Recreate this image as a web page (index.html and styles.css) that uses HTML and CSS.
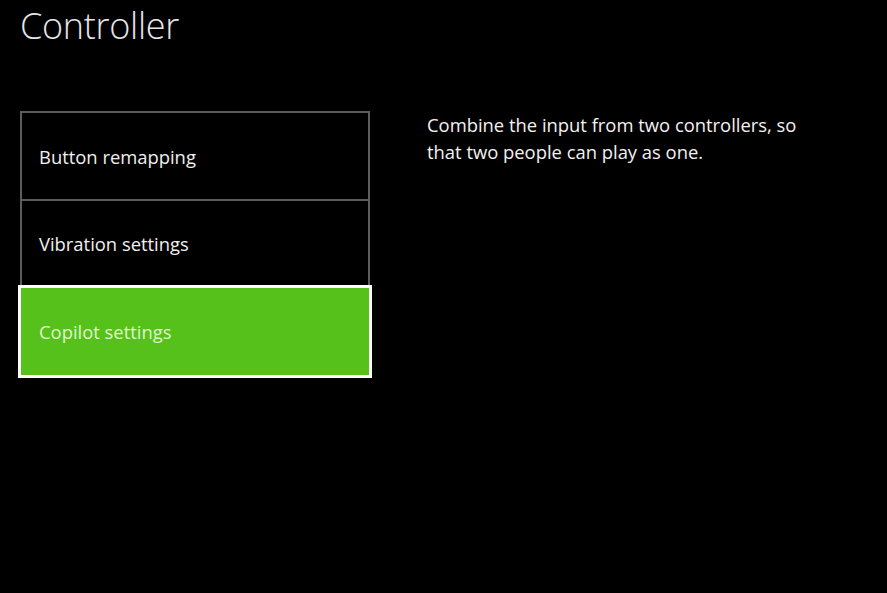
FILE: index.html
```html
<!DOCTYPE html>
<html lang="en">
<head>
  <meta charset="UTF-8">
  <meta name="viewport" content="width=device-width, initial-scale=1.0">
  <title>Controller</title>
  <link rel="stylesheet" href="styles.css">
</head>
<body>
  <header class="page-header">
    <h1>Controller</h1>
  </header>

  <main class="settings">
    <ul class="menu">
      <li class="menu-item">Button remapping</li>
      <li class="menu-item">Vibration settings</li>
      <li class="menu-item selected">Copilot settings</li>
    </ul>

    <p class="description">Combine the input from two controllers, so that two people can play as one.</p>
  </main>
</body>
</html>
```

FILE: styles.css
```css
body {
  margin: 0;
  background-color: #000;
  color: #e6e6e6;
  font-family: "Open Sans", "Noto Sans", sans-serif;
}
.page-header {
  padding: 2px 20px 0;
}
.page-header h1 {
  margin: 0;
  font-size: 36px;
  font-weight: 300;
  line-height: 48px;
  letter-spacing: -0.3px;
}
.settings {
  display: flex;
  align-items: flex-start;
  padding: 61px 20px 0;
}
.menu {
  list-style: none;
  margin: 0;
  padding: 0;
  width: 350px;
}
.menu-item {
  display: flex;
  align-items: center;
  height: 86px;
  padding-left: 17px;
  border: 2px solid #5c5c5c;
  border-bottom: none;
  font-size: 18.4px;
  font-weight: 500;
  color: #f0f0f0;
}
.menu-item + .menu-item {
  border-top: 2px solid #5c5c5c;
  height: 84px;
}
.menu-item.selected {
  height: 87px;
  margin: 0 -2px;
  padding-left: 18px;
  border: 3px solid #fff;
  background-color: #57c11b;
  color: #dff7cc;
}
.description {
  margin: 0 0 0 57px;
  width: 390px;
  font-size: 18.4px;
  font-weight: 500;
  line-height: 27px;
  color: #f2f2f2;
}
```
